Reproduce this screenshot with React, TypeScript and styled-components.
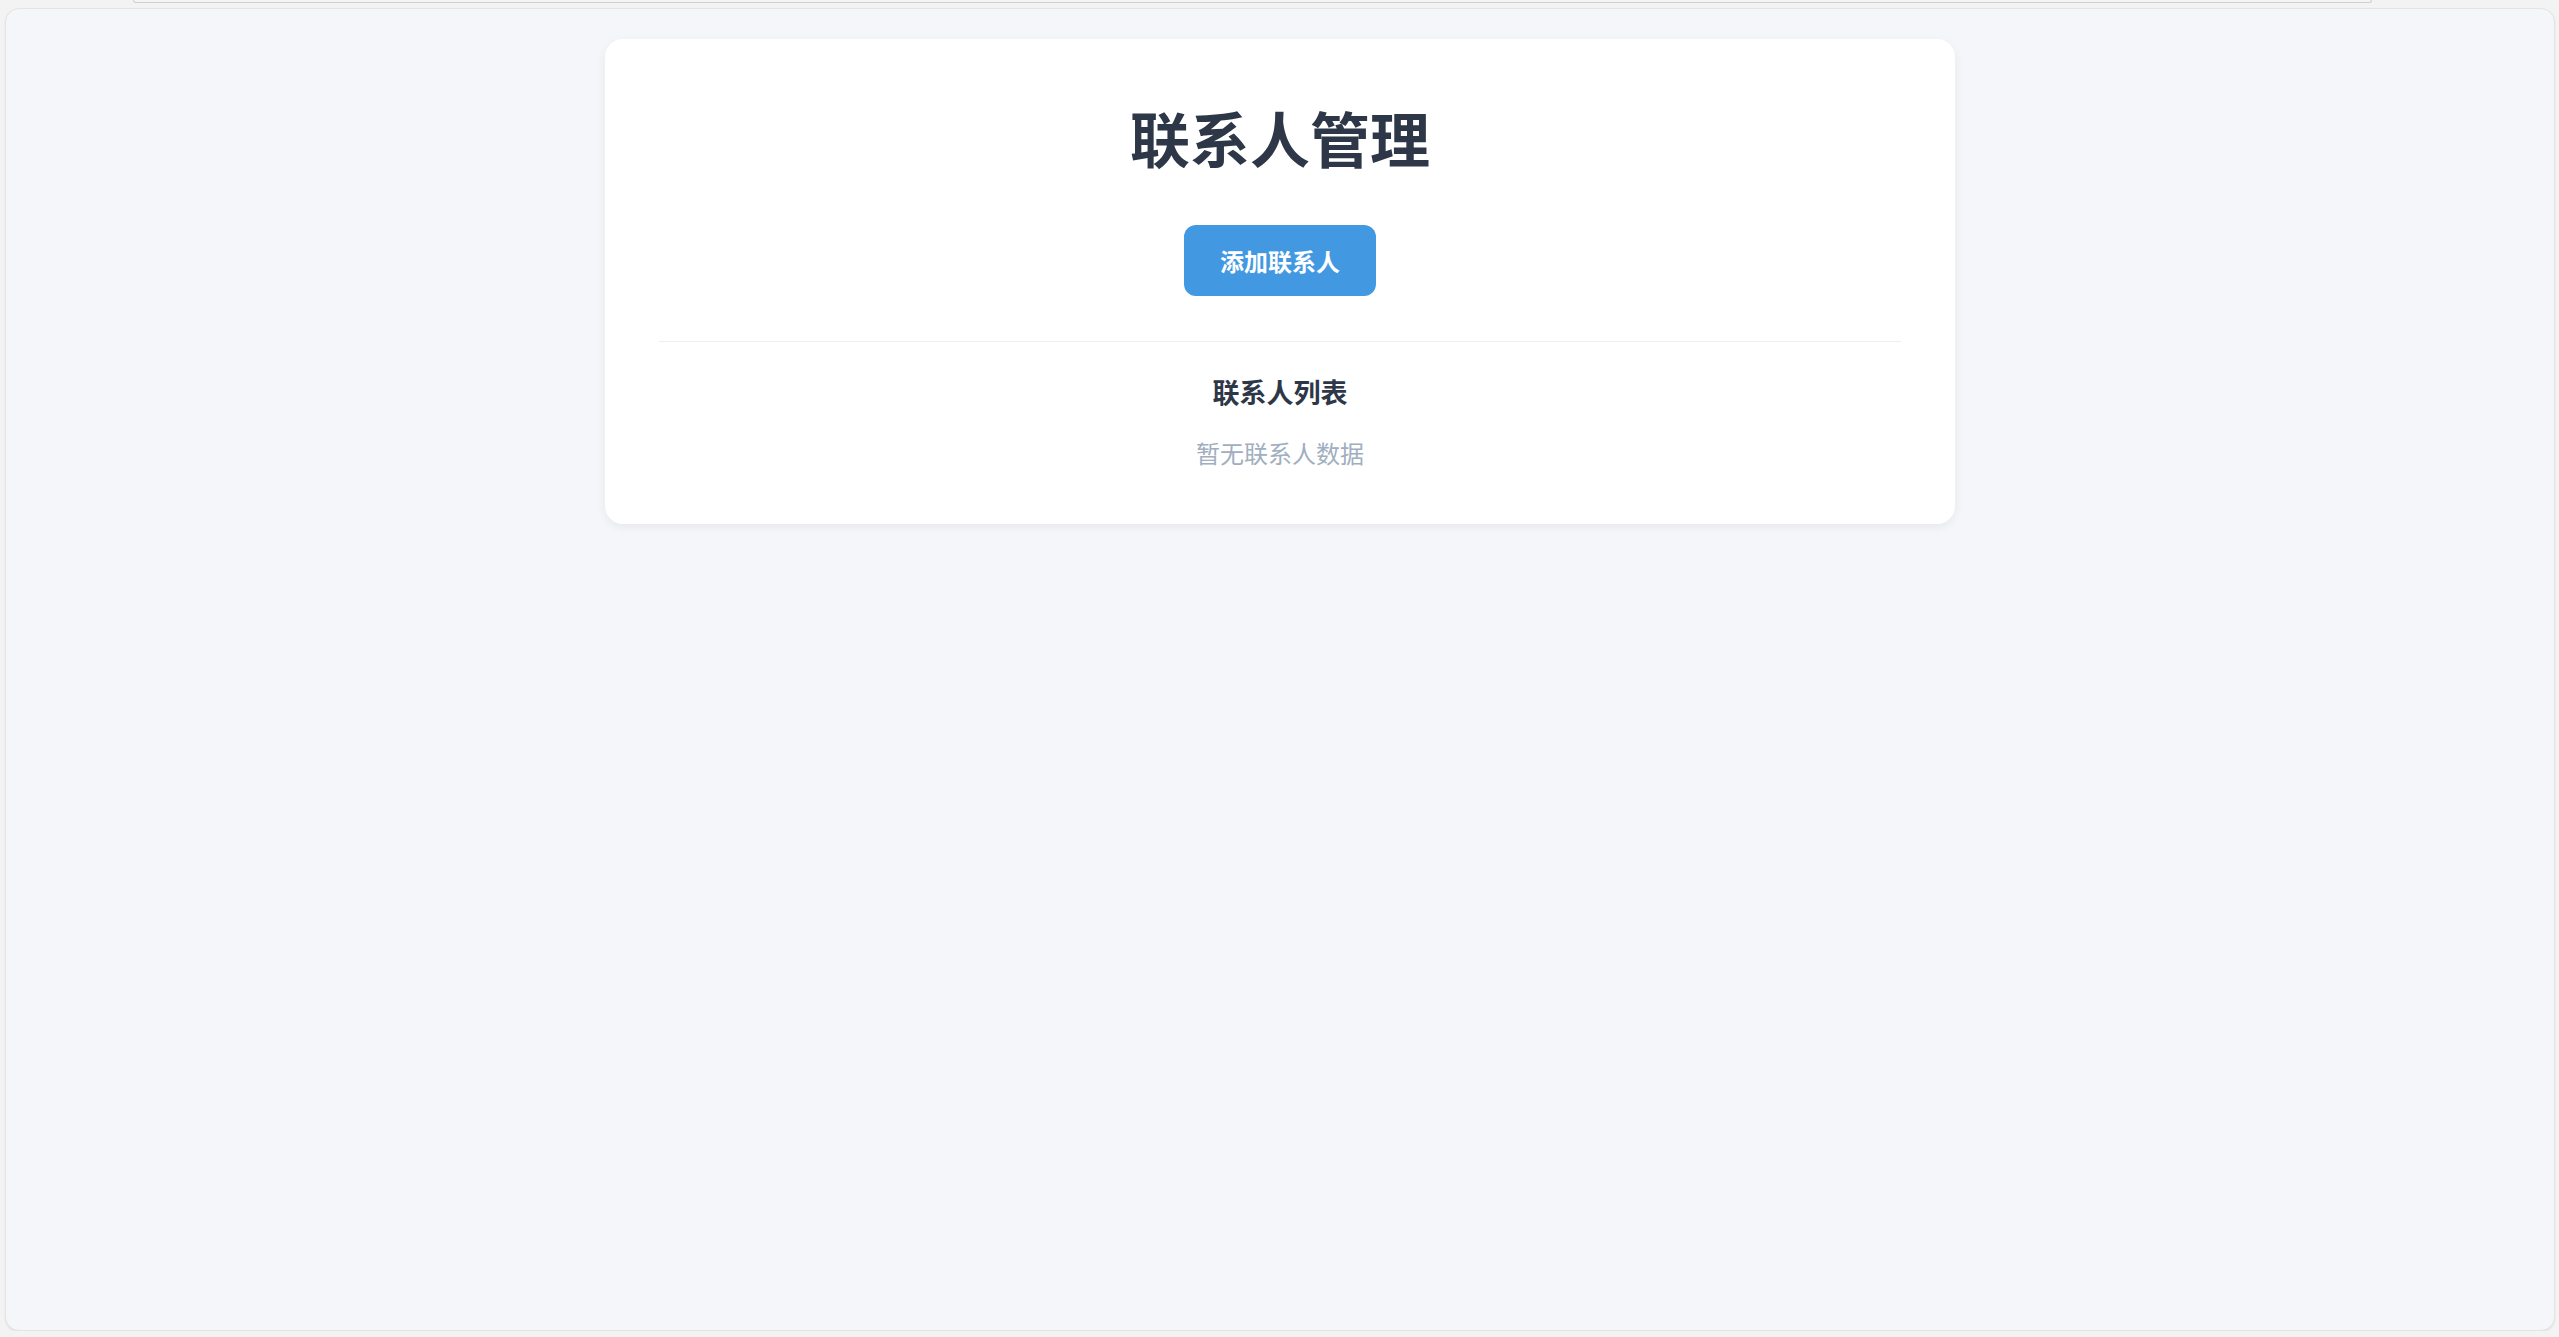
import styled, { createGlobalStyle } from "styled-components";

const GlobalStyle = createGlobalStyle`
  html, body {
    margin: 0;
    padding: 0;
    background: #f3f3f3;
  }
  body {
    font-family: "Noto Sans CJK SC", "Noto Sans", "Liberation Sans", sans-serif;
  }
  * {
    box-sizing: border-box;
  }
`;

const TopStrip = styled.div`
  height: 3px;
  margin: 0 187px 0 133px;
  border: 1px solid #cfcfcf;
  border-top: none;
  border-radius: 0 0 10px 10px;
  background: #f4f4f4;
`;

const Frame = styled.div`
  margin: 5px 4px 0 5px;
  height: 1323px;
  padding-top: 30px;
  background: #f5f6fa;
  border: 1px solid #e4e4e4;
  border-radius: 14px;
  box-shadow: 0 1px 2px rgba(0, 0, 0, 0.08);
`;

const Card = styled.div`
  width: 1350px;
  margin: 0 auto;
  padding: 54px;
  background: #ffffff;
  border-radius: 18px;
  box-shadow: 0 3px 10px rgba(0, 0, 0, 0.06);
  text-align: center;
`;

const Title = styled.h1`
  margin: 0 0 45px;
  font-size: 60px;
  font-weight: 700;
  color: #2d3748;
`;

const AddButton = styled.button`
  padding: 18px 36px;
  border: none;
  border-radius: 12px;
  background: #4299e1;
  color: #ffffff;
  font-family: inherit;
  font-size: 24px;
  font-weight: 600;
  cursor: pointer;
`;

const ListSection = styled.div`
  margin-top: 45px;
  padding-top: 30px;
  border-top: 1px solid #edf0f3;
`;

const ListTitle = styled.h2`
  margin: 0 0 24px;
  font-size: 27px;
  font-weight: 700;
  color: #2d3748;
`;

const EmptyText = styled.p`
  margin: 0;
  font-size: 24px;
  color: #a0aec0;
`;

const App = () => {
  return (
    <>
      <GlobalStyle />
      <TopStrip />
      <Frame>
        <Card>
          <Title>联系人管理</Title>
          <AddButton>添加联系人</AddButton>
          <ListSection>
            <ListTitle>联系人列表</ListTitle>
            <EmptyText>暂无联系人数据</EmptyText>
          </ListSection>
        </Card>
      </Frame>
    </>
  );
};

export default App;
